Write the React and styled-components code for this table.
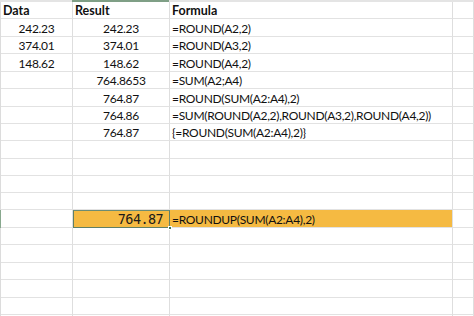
import styled, { createGlobalStyle } from "styled-components";

const GlobalStyle = createGlobalStyle`
  html, body {
    margin: 0;
    padding: 0;
    background: #ffffff;
  }
  body {
    width: 474px;
    height: 316px;
    overflow: hidden;
  }
`;

const Sheet = styled.div`
  width: 474px;
  height: 316px;
  overflow: hidden;
  background: #ffffff;
  font-family: Lato, "Liberation Sans", sans-serif;
  font-size: 12px;
  color: #111111;
`;

const TopBar = styled.div`
  display: grid;
  grid-template-columns: 72px 97px 1fr;
  height: 2px;
  background: #e4e4e4;
`;

const TopMark = styled.div`
  grid-column: 2;
  background: #7f9f86;
`;

const Row = styled.div`
  display: grid;
  grid-template-columns: 72px 97px 283px 1fr;
  height: ${(p) => p.$h}px;
  box-sizing: border-box;
  border-left: 1px solid ${(p) => (p.$active ? "#88a88e" : "#dcdcdc")};
`;

const Cell = styled.div`
  box-sizing: border-box;
  border-right: 1px solid #dedede;
  border-bottom: 1px solid #e2e2e2;
  display: flex;
  align-items: flex-end;
  justify-content: ${(p) => p.$align || "flex-start"};
  padding: 0 2px 1px 2px;
  font-weight: ${(p) => (p.$bold ? 700 : 400)};
  font-size: ${(p) => (p.$bold ? "12.5px" : "12px")};
  letter-spacing: ${(p) => (p.$bold ? "0" : "-0.3px")};
  white-space: nowrap;
  line-height: 1;
  overflow: visible;
  background: ${(p) => (p.$fill ? "#f5ba42" : "transparent")};
`;

const SelectedCell = styled(Cell)`
  position: relative;
  border: 1px solid #5f7f66;
  border-top-color: #6d8c73;
  justify-content: flex-end;
  padding: 0 6px 1px 2px;
  font-family: "DejaVu Sans Mono", "Liberation Mono", monospace;
  font-size: 13.5px;
  letter-spacing: -0.6px;
  color: #1a1a1a;

  &::after {
    content: "";
    position: absolute;
    right: -3px;
    bottom: -3px;
    width: 4px;
    height: 4px;
    background: #3f7a4f;
    border: 1px solid #ffffff;
    box-sizing: border-box;
  }
`;

const lines = [18, 36, 53, 71, 88, 106, 123, 140, 158, 175, 192, 209, 227, 244, 262, 279, 297, 314, 331];

const rows = [
  { a: "Data", b: "Result", c: "Formula", head: true },
  { a: "242.23", b: "242.23", c: "=ROUND(A2,2)" },
  { a: "374.01", b: "374.01", c: "=ROUND(A3,2)" },
  { a: "148.62", b: "148.62", c: "=ROUND(A4,2)" },
  { b: "764.8653", c: "=SUM(A2;A4)" },
  { b: "764.87", c: "=ROUND(SUM(A2:A4),2)" },
  { b: "764.86", c: "=SUM(ROUND(A2,2),ROUND(A3,2),ROUND(A4,2))" },
  { b: "764.87", c: "{=ROUND(SUM(A2:A4),2)}" },
  {},
  {},
  {},
  {},
  { b: "764.87", c: "=ROUNDUP(SUM(A2:A4),2)", active: true },
  {},
  {},
  {},
  {},
  {},
  {},
];

function App() {
  let prev = 2;
  return (
    <Sheet>
      <GlobalStyle />
      <TopBar>
        <TopMark />
      </TopBar>
      {rows.map((r, i) => {
        const h = lines[i] + 1 - prev;
        prev = lines[i] + 1;
        return (
          <Row key={i} $h={h} $active={r.active}>
            <Cell $bold={r.head} $align={r.head ? "flex-start" : "center"}>
              {r.a}
            </Cell>
            {r.active ? (
              <SelectedCell $fill>{r.b}</SelectedCell>
            ) : (
              <Cell $bold={r.head} $align={r.head ? "flex-start" : "center"}>
                {r.b}
              </Cell>
            )}
            <Cell $bold={r.head} $fill={r.active}>
              {r.c}
            </Cell>
            <Cell />
          </Row>
        );
      })}
    </Sheet>
  );
}

export default App;
